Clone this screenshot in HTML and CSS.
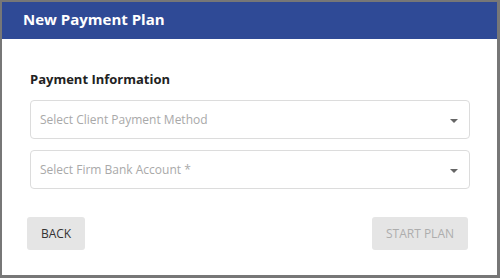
FILE: index.html
```html
<!DOCTYPE html>
<html>
<head>
<meta charset="utf-8">
<link rel="stylesheet" href="styles.css">
</head>
<body>
<div class="dialog">
  <div class="header">New Payment Plan</div>
  <div class="content">
    <div class="section-title">Payment Information</div>
    <div class="select">
      <span class="placeholder">Select Client Payment Method</span>
      <span class="caret"></span>
    </div>
    <div class="select">
      <span class="placeholder">Select Firm Bank Account *</span>
      <span class="caret"></span>
    </div>
  </div>
  <div class="actions">
    <button class="btn back">BACK</button>
    <button class="btn disabled">START PLAN</button>
  </div>
</div>
</body>
</html>
```
FILE: styles.css
```css
html, body {
  margin: 0;
  padding: 0;
  background: #777777;
  width: 500px;
  height: 278px;
  overflow: hidden;
}
body {
  padding: 2px 3px 3px 2px;
  box-sizing: border-box;
  font-family: "Open Sans", "Liberation Sans", sans-serif;
}
.dialog {
  background: #ffffff;
  height: 273px;
  display: flex;
  flex-direction: column;
}
.header {
  background: #2f4a96;
  color: #ffffff;
  height: 37px;
  box-sizing: border-box;
  padding-left: 21px;
  font-size: 15px;
  font-weight: 700;
  line-height: 35px;
}
.content {
  padding: 31px 27px 0 28px;
  display: flex;
  flex-direction: column;
  gap: 11px;
}
.section-title {
  font-size: 13px;
  font-weight: 700;
  color: #222;
  line-height: 18px;
  margin-bottom: 1px;
}
.select {
  height: 39px;
  border: 1px solid #dcdcdc;
  border-radius: 4px;
  box-sizing: border-box;
  display: flex;
  align-items: center;
  justify-content: space-between;
  padding: 0 11px 0 9px;
}
.placeholder {
  font-size: 12px;
  color: #a9a9a9;
}
.caret {
  width: 0;
  height: 0;
  border-left: 4px solid transparent;
  border-right: 4px solid transparent;
  border-top: 4px solid #666;
  margin-top: 2px;
}
.actions {
  display: flex;
  justify-content: space-between;
  padding: 0 29px 0 25px;
  margin-top: 28px;
}
.btn {
  height: 33px;
  border: none;
  border-radius: 3px;
  background: #e5e5e5;
  color: #333;
  font-family: "Open Sans", "Liberation Sans", sans-serif;
  font-size: 12px;
  padding: 0 13px;
}
.btn.back {
  width: 58px;
}
.btn.disabled {
  color: #adadad;
  width: 96px;
}
```
